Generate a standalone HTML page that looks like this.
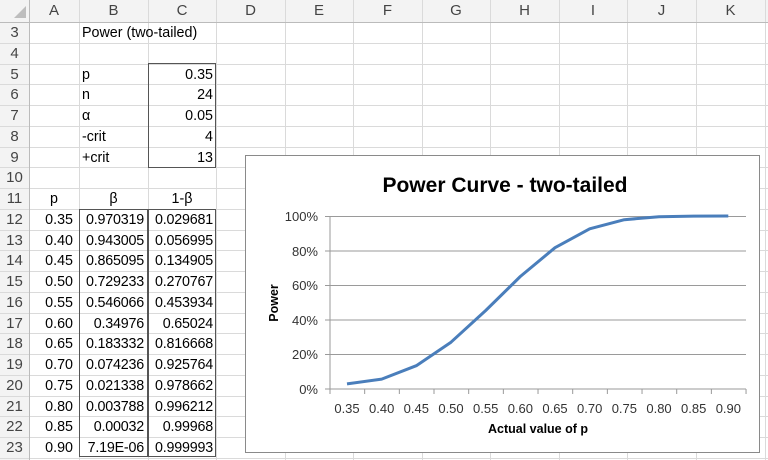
<!DOCTYPE html>
<html><head><style>
body{margin:0;width:768px;height:460px;overflow:hidden;background:#fff;font-family:"Liberation Sans",sans-serif;position:relative}
.t{position:absolute;font-size:14.3px;color:#000;line-height:23px;height:21px;white-space:nowrap}
.r{text-align:right}.c{text-align:center}
.h{position:absolute;font-size:15px;color:#444;line-height:22px;text-align:center}
</style></head><body>
<svg width="768" height="460" style="position:absolute;left:0;top:0">
<rect x="0" y="0" width="768" height="22" fill="#f3f3f3"/>
<rect x="0" y="0" width="29" height="460" fill="#f3f3f3"/>
<g stroke="#dadada" stroke-width="1">
<line x1="79.5" y1="0" x2="79.5" y2="460"/><line x1="148.5" y1="0" x2="148.5" y2="460"/>
<line x1="216.5" y1="0" x2="216.5" y2="460"/><line x1="285.5" y1="0" x2="285.5" y2="460"/>
<line x1="353.5" y1="0" x2="353.5" y2="460"/><line x1="422.5" y1="0" x2="422.5" y2="460"/>
<line x1="490.5" y1="0" x2="490.5" y2="460"/><line x1="559.5" y1="0" x2="559.5" y2="460"/>
<line x1="627.5" y1="0" x2="627.5" y2="460"/><line x1="696.5" y1="0" x2="696.5" y2="460"/>
<line x1="765.5" y1="0" x2="765.5" y2="460"/>
</g>
<g stroke="#dadada" stroke-width="1" id="rows"></g>
<line x1="29.5" y1="0" x2="29.5" y2="460" stroke="#bbb"/>
<line x1="0" y1="22.5" x2="768" y2="22.5" stroke="#bbb"/>
<polygon points="14,18 26,18 26,6" fill="#bdbdbd"/>
<g fill="none" stroke="#555" stroke-width="1">
<rect x="148.5" y="63.5" width="67" height="104"/>
<rect x="79.5" y="209.5" width="68" height="247"/>
<rect x="148.5" y="209.5" width="67" height="247"/>
</g>
<rect x="245.5" y="155.5" width="514" height="297" fill="#fff" stroke="#8a8a8a"/>
<g stroke="#9a9a9a" stroke-width="1">
<line x1="325" y1="216.5" x2="746" y2="216.5"/><line x1="325" y1="251" x2="746" y2="251"/>
<line x1="325" y1="285.5" x2="746" y2="285.5"/><line x1="325" y1="320" x2="746" y2="320"/>
<line x1="325" y1="354.5" x2="746" y2="354.5"/><line x1="325" y1="389" x2="746" y2="389"/>
<line x1="330" y1="216" x2="330" y2="389"/>
</g>
<g stroke="#9a9a9a" id="ticks"></g>
<polyline fill="none" stroke="#4a7ebb" stroke-width="3" stroke-linejoin="round" points="347,383.9 381.7,379.1 416.3,365.7 451,342.2 485.7,310.5 520.3,276.5 555,247.7 589.7,228.8 624.3,219.7 659,216.7 693.7,216.1 728.3,216"/>
<text x="505" y="192" font-family="Liberation Sans" font-weight="bold" font-size="21" text-anchor="middle">Power Curve - two-tailed</text>
<text x="538" y="433" font-family="Liberation Sans" font-weight="bold" font-size="12.5" text-anchor="middle">Actual value of p</text>
<text transform="translate(278,303) rotate(-90)" font-family="Liberation Sans" font-weight="bold" font-size="12.5" text-anchor="middle">Power</text>
<g font-family="Liberation Sans" font-size="13" fill="#333" text-anchor="end">
<text x="318" y="221">100%</text><text x="318" y="256">80%</text><text x="318" y="290">60%</text>
<text x="318" y="325">40%</text><text x="318" y="359">20%</text><text x="318" y="394">0%</text>
</g>
<g font-family="Liberation Sans" font-size="13" fill="#333" text-anchor="middle" id="xl"></g>
</svg>
<script>
var g=document.getElementById('rows'),s='';
for(var r=0;r<22;r++){var y=Math.round(22+r*20.75)+0.5;s+='<line x1="0" y1="'+y+'" x2="768" y2="'+y+'"/>';}
g.innerHTML=s;
var t='',l='',xs=['0.35','0.40','0.45','0.50','0.55','0.60','0.65','0.70','0.75','0.80','0.85','0.90'];
for(var i=0;i<=12;i++){var x=330+i*34.67;t+='<line x1="'+x+'" y1="389" x2="'+x+'" y2="394"/>';}
for(var i=0;i<12;i++){l+='<text x="'+(347+i*34.67)+'" y="413">'+xs[i]+'</text>';}
document.getElementById('ticks').innerHTML=t;document.getElementById('xl').innerHTML=l;
</script>
<div class="h" style="left:29px;width:50px;top:0">A</div>
<div class="h" style="left:79px;width:69px;top:0">B</div>
<div class="h" style="left:148px;width:68px;top:0">C</div>
<div class="h" style="left:216px;width:69px;top:0">D</div>
<div class="h" style="left:285px;width:68px;top:0">E</div>
<div class="h" style="left:353px;width:69px;top:0">F</div>
<div class="h" style="left:422px;width:68px;top:0">G</div>
<div class="h" style="left:490px;width:69px;top:0">H</div>
<div class="h" style="left:559px;width:68px;top:0">I</div>
<div class="h" style="left:627px;width:69px;top:0">J</div>
<div class="h" style="left:696px;width:69px;top:0">K</div>
<div id="cells"></div>
<script>
var rows={3:['','Power (two-tailed)',''],5:['','p','0.35'],6:['','n','24'],7:['','α','0.05'],8:['','-crit','4'],9:['','+crit','13'],11:['p','β','1-β'],
12:['0.35','0.970319','0.029681'],13:['0.40','0.943005','0.056995'],14:['0.45','0.865095','0.134905'],15:['0.50','0.729233','0.270767'],
16:['0.55','0.546066','0.453934'],17:['0.60','0.34976','0.65024'],18:['0.65','0.183332','0.816668'],19:['0.70','0.074236','0.925764'],
20:['0.75','0.021338','0.978662'],21:['0.80','0.003788','0.996212'],22:['0.85','0.00032','0.99968'],23:['0.90','7.19E-06','0.999993']};
var h='';
for(var r=3;r<=23;r++){var y=22+(r-3)*20.75;
h+='<div class="h" style="left:0;width:29px;top:'+y+'px;line-height:21px">'+r+'</div>';
var v=rows[r];if(!v)continue;
if(r==11){h+='<div class="t c" style="left:29px;width:50px;top:'+y+'px">p</div><div class="t c" style="left:79px;width:69px;top:'+y+'px">β</div><div class="t c" style="left:148px;width:68px;top:'+y+'px">1-β</div>';continue;}
if(r<11){h+='<div class="t" style="left:82px;top:'+y+'px">'+v[1]+'</div><div class="t r" style="left:148px;width:65px;top:'+y+'px">'+v[2]+'</div>';continue;}
h+='<div class="t r" style="left:29px;width:44px;top:'+y+'px">'+v[0]+'</div><div class="t r" style="left:79px;width:65px;top:'+y+'px;letter-spacing:-0.2px">'+v[1]+'</div><div class="t r" style="left:148px;width:65px;top:'+y+'px;letter-spacing:-0.2px">'+v[2]+'</div>';}
document.getElementById('cells').innerHTML=h;
</script>
</body></html>
